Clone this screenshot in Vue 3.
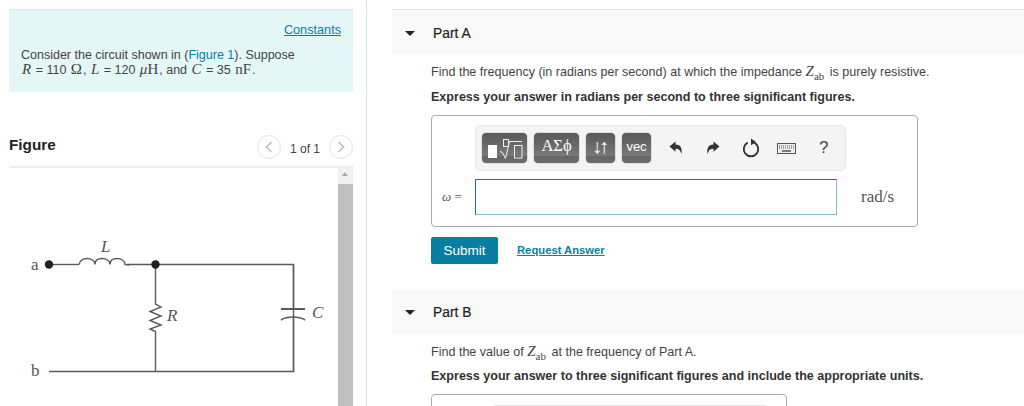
<script setup>
const tools = ['undo', 'redo', 'reset', 'keyboard', 'help']
</script>

<template>
  <div class="page">
    <aside class="left">
      <section class="intro">
        <a class="constants">Constants</a>
        <p class="intro-text">
          Consider the circuit shown in (<span class="link">Figure 1</span>). Suppose<br />
          <i class="m">R</i> = 110 <span class="m">Ω</span>, <i class="m">L</i> = 120 <span class="m"><i>μ</i>H</span>, and
          <i class="m">C</i> = 35 <span class="m">nF</span>.
        </p>
      </section>

      <header class="figure-head">
        <h2>Figure</h2>
        <div class="pager">
          <span class="round">
            <svg width="8" height="12" viewBox="0 0 8 12"><path d="M6.5 1 1.5 6l5 5" /></svg>
          </span>
          <span class="count">1 of 1</span>
          <span class="round">
            <svg width="8" height="12" viewBox="0 0 8 12"><path d="M1.5 1l5 5-5 5" /></svg>
          </span>
        </div>
      </header>

      <div class="figure">
        <svg class="circuit" width="329" height="238" viewBox="9 168 329 238">
          <g fill="none" stroke="#5a5a5a" stroke-width="1.4">
            <path d="M49 264.500H79" />
            <path d="M79 264.500c1-4 4-6 8-6s8 2 8 6c0-4 3-6 7-6s8 2 8 6c0-4 3-6 7-6s8 2 8 6c1 0 2 .5 4 .5" />
            <path d="M127 264.500H293.500V371.500H49" />
            <path d="M155.500 264.500V304l5.500 3-11 4.500 11 4.500-11 4.500 11 4.500-11 4 5.500 2.500V371.500" />
            <path d="M293.500 264.500V309M293.500 316V371.500" />
            <path d="M281 309h24" stroke-width="2" />
            <path d="M281 320c6-4 18-4 24 0" stroke-width="1.600" />
          </g>
          <circle cx="49" cy="264.500" r="4.200" fill="#222" />
          <circle cx="155.500" cy="264.500" r="4.200" fill="#222" />
          <text x="31" y="270" class="lbl">a</text>
          <text x="31" y="376" class="lbl">b</text>
          <text x="101" y="252" class="lbl it">L</text>
          <text x="167" y="321" class="lbl it">R</text>
          <text x="312" y="318" class="lbl it">C</text>
        </svg>
        <div class="scrollbar">
          <div class="scroll-up"></div>
          <div class="scroll-thumb"></div>
        </div>
      </div>
    </aside>

    <main class="right">
      <div class="part-bar">
        <span class="caret"></span>
        <span class="part-name">Part A</span>
      </div>
      <div class="part-body">
        <p class="question">
          Find the frequency (in radians per second) at which the impedance
          <span class="m z"><i>Z</i><sub>ab</sub></span> is purely resistive.
        </p>
        <p class="express">Express your answer in radians per second to three significant figures.</p>

        <div class="answer">
          <div class="toolbar">
            <div class="btn-group">
              <button class="tb wide templates">
                <svg width="47" height="31" viewBox="0 0 47 31">
                  <rect x="7" y="12" width="9" height="13" fill="#fff" />
                  <g fill="none" stroke="#eee" stroke-width="1">
                    <rect x="22.500" y="6.500" width="5" height="7" />
                    <path d="M19 18.500l2.500 1 3 6L28.500 8.500H41" />
                    <rect x="33.500" y="12.500" width="7.500" height="12.500" />
                  </g>
                </svg>
              </button>
              <button class="tb wide greek">ΑΣϕ</button>
              <button class="tb arrows">↓↑</button>
              <button class="tb vec">vec</button>
            </div>
            <div class="tool-icons">
              <span v-for="t in tools" :key="t" class="tool" :class="'tool-' + t">
                <svg v-if="t === 'undo'" width="14" height="16" viewBox="0 0 14 14">
                  <path d="M0.500 5.500 6.500 0.500V3.500C11 3.500 13.500 6.500 12.500 13 11.500 9.500 10 7.800 6.500 7.800V10.800Z" fill="#333" />
                </svg>
                <svg v-else-if="t === 'redo'" width="14" height="16" viewBox="0 0 14 14">
                  <path d="M13.500 5.500 7.500 0.500V3.500C3 3.500 .5 6.500 1.500 13 2.500 9.500 4 7.800 7.500 7.800V10.800Z" fill="#333" />
                </svg>
                <svg v-else-if="t === 'reset'" width="18" height="20" viewBox="0 0 16 18">
                  <path d="M5 4.200a6.500 6.500 0 1 0 6 0" fill="none" stroke="#333" stroke-width="1.700" />
                  <path d="M7 0.500v6L11.500 3.500Z" fill="#333" transform="translate(1 0)" />
                </svg>
                <svg v-else-if="t === 'keyboard'" width="19" height="11" viewBox="0 0 19 11">
                  <rect x=".5" y=".5" width="18" height="10" fill="#eee" stroke="#555" />
                  <path d="M2 3h15M2 5h15" stroke="#555" stroke-dasharray="1 1" />
                  <path d="M5 8h9" stroke="#555" stroke-width="1.500" />
                </svg>
                <span v-else class="help">?</span>
              </span>
            </div>
          </div>

          <div class="input-row">
            <span class="var"><i>ω</i> =</span>
            <div class="input"></div>
            <span class="unit">rad/s</span>
          </div>
        </div>

        <div class="actions">
          <button class="submit">Submit</button>
          <a class="request">Request Answer</a>
        </div>
      </div>

      <div class="part-bar second">
        <span class="caret"></span>
        <span class="part-name">Part B</span>
      </div>
      <div class="part-body">
        <p class="question q2">
          Find the value of <span class="m z"><i>Z</i><sub>ab</sub></span> at the frequency of Part A.
        </p>
        <p class="express e2">Express your answer to three significant figures and include the appropriate units.</p>
        <div class="answer-b">
          <div class="toolbar-b"></div>
        </div>
      </div>
    </main>
  </div>
</template>

<style>
html,
body {
  margin: 0;
  overflow: hidden;
  background: #fff;
}
</style>

<style scoped>
.page {
  display: flex;
  width: 1024px;
  height: 406px;
  overflow: hidden;
  font-family: "Liberation Sans", Arial, sans-serif;
  color: #444;
}

.left {
  width: 367px;
  height: 406px;
  box-sizing: border-box;
  padding: 9px 13px 0 9px;
  border-right: 1px solid #d3e3f1;
  flex-shrink: 0;
}

.intro {
  height: 83px;
  box-sizing: border-box;
  background: #e5f6f7;
  border-top: 1px solid #e2e6e6;
  padding: 12px 12px 0 12px;
}

.constants {
  display: block;
  text-align: right;
  font-size: 12.700px;
  line-height: 16px;
  color: #0a7ea4;
  text-decoration: underline;
}

.intro-text {
  margin: 10px 0 0;
  font-size: 12.500px;
  line-height: 15px;
}

.link {
  color: #0a7ea4;
}

.m {
  font-family: "Liberation Serif", serif;
  font-size: 15px;
  line-height: 0;
  margin: 0 1px;
}

.figure-head {
  display: flex;
  justify-content: space-between;
  align-items: center;
  height: 24px;
  margin-top: 43px;
}

.figure-head h2 {
  margin: 0;
  font-size: 15.300px;
  font-weight: 700;
  color: #222;
  position: relative;
  top: -2px;
}

.pager {
  display: flex;
  align-items: center;
  gap: 9px;
}

.count {
  font-size: 12px;
  color: #444;
  position: relative;
  top: 2px;
}

.round {
  width: 22px;
  height: 22px;
  border: 1px solid #e3e3e3;
  border-radius: 50%;
  display: flex;
  align-items: center;
  justify-content: center;
}

.round svg path {
  fill: none;
  stroke: #bbb;
  stroke-width: 1.500;
}

.figure {
  display: flex;
  margin-top: 7px;
  border-top: 2px solid #eceeee;
  height: 240px;
}

.circuit {
  display: block;
  flex-shrink: 0;
}

.lbl {
  font-family: "Liberation Serif", serif;
  font-size: 17px;
  fill: #555;
}

.it {
  font-style: italic;
}

.scrollbar {
  width: 15px;
  flex-shrink: 0;
  display: flex;
  flex-direction: column;
}

.scroll-up {
  height: 16px;
  background: #f1f1f1;
  position: relative;
}

.scroll-up::after {
  content: "";
  position: absolute;
  left: 4px;
  top: 4px;
  border-left: 3.500px solid transparent;
  border-right: 3.500px solid transparent;
  border-bottom: 4px solid #aaa;
}

.scroll-thumb {
  flex: 1;
  background: #bfbfbf;
}

.right {
  flex: 1;
  padding: 9px 0 0 25px;
  min-width: 0;
}

.part-bar {
  height: 46px;
  box-sizing: border-box;
  border-top: 1px solid #e4e4e4;
  padding-top: 1px;
  background: #f9f9f9;
  display: flex;
  align-items: center;
}

.part-bar.second {
  height: 44px;
  border-top: 0;
  padding-top: 0;
  margin-top: 26px;
}

.caret {
  margin-left: 13px;
  width: 0;
  height: 0;
  border-left: 5px solid transparent;
  border-right: 5px solid transparent;
  border-top: 5.500px solid #222;
}

.part-name {
  margin-left: 18px;
  font-size: 13.800px;
  font-weight: 400;
  color: #222;
  -webkit-text-stroke: 0.200px #222;
}

.part-body {
  padding-left: 39px;
}

.question {
  margin: 9px 0 0;
  font-size: 12.550px;
  line-height: 16px;
}

.q2 {
  margin-top: 10px;
}

.z {
  margin: 0;
}

.z i {
  font-size: 15px;
}

.z sub {
  font-size: 11px;
  line-height: 0;
  margin-right: 2px;
}

.express {
  margin: 9px 0 0;
  font-size: 12.550px;
  font-weight: 700;
  line-height: 16px;
  color: #333;
}

.e2 {
  margin-top: 8px;
}

.answer {
  width: 487px;
  height: 112px;
  box-sizing: border-box;
  margin-top: 10px;
  border: 1px solid #aaa;
  border-radius: 4px;
  padding: 9px 0 0 43px;
}

.toolbar {
  width: 371px;
  height: 46px;
  box-sizing: border-box;
  background: #f4f4f4;
  border: 1px solid #e6e6e6;
  border-radius: 5px;
  display: flex;
  align-items: center;
  padding-left: 5px;
}

.btn-group {
  display: flex;
  gap: 5px;
}

.tb {
  height: 32px;
  padding: 0 0 4px;
  border: 1px solid #ddd;
  border-radius: 5px;
  background: linear-gradient(#585858 0, #7a7a7a 78%, #666 78%, #6c6c6c 100%);
  color: #fff;
  display: flex;
  align-items: center;
  justify-content: center;
  box-sizing: border-box;
}

.wide {
  width: 47px;
}

.templates {
  padding: 0;
}

.templates svg {
  margin: -1px;
  flex-shrink: 0;
}

.greek {
  font-family: "Liberation Serif", serif;
  font-size: 16.500px;
}

.arrows {
  width: 31px;
  font-size: 20px;
  font-family: "Liberation Sans", sans-serif;
  letter-spacing: -3px;
  padding-right: 3px;
}

.vec {
  width: 31px;
  font-size: 13px;
  font-family: "Liberation Sans", sans-serif;
}

.tool-icons {
  display: flex;
  align-items: center;
  margin-left: 5px;
}

.tool {
  width: 37.500px;
  display: flex;
  justify-content: center;
  align-items: center;
}

.tool-keyboard svg,
.tool-help .help {
  margin-right: 4px;
}

.help {
  font-size: 17px;
  color: #444;
}

.input-row {
  display: flex;
  align-items: center;
  margin: 8px 0 0 -33px;
}

.var {
  width: 33px;
  box-sizing: border-box;
  font-family: "Liberation Serif", serif;
  font-size: 13px;
  color: #555;
}

.input {
  width: 362px;
  height: 36px;
  box-sizing: border-box;
  border: 1px solid #7fc0d0;
  border-top-color: #0f7a96;
  border-left-color: #0f7a96;
}

.unit {
  margin-left: 24px;
  font-family: "Liberation Serif", serif;
  font-size: 17px;
  color: #555;
}

.actions {
  display: flex;
  align-items: center;
  margin-top: 10px;
  gap: 19px;
}

.submit {
  width: 67px;
  height: 27px;
  padding: 0;
  border: 0;
  border-radius: 2px;
  background: #087ea3;
  color: #fff;
  font-family: "Liberation Sans", sans-serif;
  font-size: 13.500px;
}

.request {
  font-size: 11.250px;
  font-weight: 700;
  color: #0a7ea4;
  text-decoration: underline;
  position: relative;
  top: -1px;
}

.answer-b {
  width: 356px;
  height: 40px;
  box-sizing: border-box;
  margin-top: 10px;
  border: 1px solid #aaa;
  border-radius: 4px;
  padding: 10px 0 0 58px;
}

.toolbar-b {
  width: 279px;
  height: 30px;
  box-sizing: border-box;
  background: #f4f4f4;
  border: 1px solid #e6e6e6;
  border-radius: 5px;
}
</style>
